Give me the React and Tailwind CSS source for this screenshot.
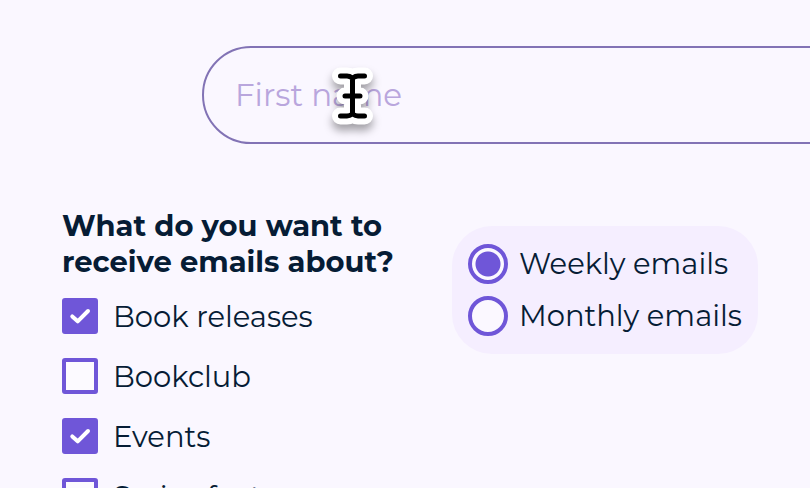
import { useState } from "react";

const topics = [
  { id: "releases", label: "Book releases", checked: true },
  { id: "bookclub", label: "Bookclub", checked: false },
  { id: "events", label: "Events", checked: true },
  { id: "series", label: "Series facts", checked: false },
];

const frequencies = [
  { id: "weekly", label: "Weekly emails" },
  { id: "monthly", label: "Monthly emails" },
];

function Topic({ id, label, checked }) {
  return (
    <li className="flex items-center gap-[15px]">
      <span className="grid shrink-0">
        <input
          id={id}
          type="checkbox"
          defaultChecked={checked}
          className="peer col-start-1 row-start-1 size-9 appearance-none rounded-[3px] border-4 border-[#6f56d8] bg-[#fcfaff] checked:bg-[#6f56d8]"
        />
        <svg
          viewBox="0 0 36 36"
          className="pointer-events-none invisible col-start-1 row-start-1 size-9 peer-checked:visible"
          fill="none"
          stroke="white"
          strokeWidth="4"
          strokeLinecap="round"
          strokeLinejoin="round"
        >
          <path d="M10.3 18.4 L15.7 23.3 L26 13" />
        </svg>
      </span>
      <label htmlFor={id} className="pt-0.5">
        {label}
      </label>
    </li>
  );
}

// I-beam pointer hovering over the name field
function TextCursor() {
  const beam =
    "M20.5 14 H27 C29.5 14 31 15 32.5 16 C34 15 35.5 14 38 14 H44.5 M32.5 16 V52 M25 34 H40 M20.5 54 H27 C29.5 54 31 53 32.5 52 C34 53 35.5 54 38 54 H44.5";
  return (
    <svg
      viewBox="0 0 65 75"
      className="pointer-events-none absolute top-4 left-[118px] h-[75px] w-[65px] drop-shadow-[0_6px_4px_rgba(0,0,0,0.35)]"
      fill="none"
      strokeLinecap="round"
      strokeLinejoin="round"
      aria-hidden="true"
    >
      <path d={beam} stroke="white" strokeWidth="17" />
      <path d={beam} stroke="black" strokeWidth="5" />
    </svg>
  );
}

export default function App() {
  const [frequency, setFrequency] = useState("weekly");

  return (
    <main className="h-screen overflow-hidden bg-[#faf7ff] pt-[46px] font-[Montserrat,Inter,sans-serif] text-[29px] leading-9 text-[#061c35]">
      <div className="relative -mr-16 ml-[202px]">
        <input
          type="text"
          aria-label="First name"
          placeholder="First name"
          className="block h-[98px] w-full rounded-full border-2 border-[#8273b5] px-[31px] text-[31px] placeholder:text-[#b9a6dd]"
        />
        <TextCursor />
      </div>

      <div className="mt-16 flex items-start gap-[50px] pl-[62px]">
        <fieldset className="w-[340px] shrink-0">
          <legend className="font-bold whitespace-nowrap">
            What do you want to
            <br />
            receive emails about?
          </legend>
          <ul className="mt-[17px] flex flex-col gap-[22px]">
            {topics.map((topic) => (
              <Topic key={topic.id} {...topic} />
            ))}
          </ul>
        </fieldset>

        <div
          role="radiogroup"
          aria-label="Email frequency"
          className="mt-[18px] flex shrink-0 flex-col gap-3 rounded-[40px] bg-[#f5eeff] px-4 py-[18px]"
        >
          {frequencies.map(({ id, label }) => (
            <div key={id} className="flex items-center gap-[11px]">
              <input
                id={id}
                type="radio"
                name="frequency"
                checked={frequency === id}
                onChange={() => setFrequency(id)}
                className="size-10 shrink-0 appearance-none rounded-full border-4 border-[#6f56d8] bg-[#fbf8ff] checked:bg-[radial-gradient(circle,#6f56d8_12px,#fbf8ff_13px)]"
              />
              <label htmlFor={id} className="whitespace-nowrap">
                {label}
              </label>
            </div>
          ))}
        </div>
      </div>
    </main>
  );
}
